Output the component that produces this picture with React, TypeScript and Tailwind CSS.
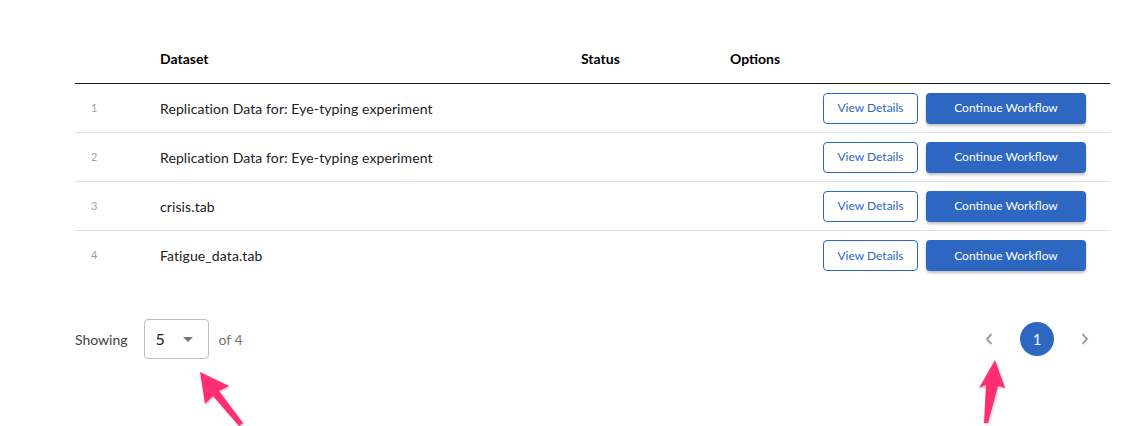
import React from "react";

const rows = [
  "Replication Data for: Eye-typing experiment",
  "Replication Data for: Eye-typing experiment",
  "crisis.tab",
  "Fatigue_data.tab",
];

export default function App() {
  return (
    <div
      className="relative w-full h-[426px] bg-white text-[#212121] overflow-hidden"
      style={{ fontFamily: 'Lato, "Open Sans", sans-serif' }}
    >
      <div className="ml-[75px] w-[1035px] pt-[36px]">
        {/* header */}
        <div className="flex items-center h-[48px] pb-[2px] border-b border-[#1a1a1a] text-[14px] font-bold text-black">
          <div className="w-[85px]" />
          <div className="w-[421px]">Dataset</div>
          <div className="w-[149px]">Status</div>
          <div className="flex-1">Options</div>
        </div>
        {/* rows */}
        {rows.map((r, i) => (
          <div
            key={i}
            className={`flex items-center h-[49px] ${i < rows.length - 1 ? "border-b border-[#e0e0e0]" : ""}`}
          >
            <div className="w-[85px] pl-[16px] text-[11px] text-[#9e9e9e]">{i + 1}</div>
            <div className="w-[421px] text-[14px] tracking-[0.1px] text-[#212121]">{r}</div>
            <div className="w-[149px]" />
            <div className="flex-1 flex justify-end items-center gap-[8px] pr-[24px]">
              <button className="w-[95px] h-[31px] rounded-[4px] border border-[#2e67c1] text-[#2e67c1] text-[12px] bg-white">
                View Details
              </button>
              <button className="w-[160px] h-[31px] rounded-[4px] bg-[#2e67c1] text-white text-[12px] shadow-[0_2px_3px_rgba(0,0,0,0.25)]">
                Continue Workflow
              </button>
            </div>
          </div>
        ))}
        {/* footer */}
        <div className="flex items-center justify-between mt-[39px] h-[40px]">
          <div className="flex items-center">
            <span className="text-[14px] text-[#424242]">Showing</span>
            <div className="ml-[16px] w-[65px] h-[40px] rounded-[4px] border border-[#bdbdbd] flex items-center pl-[11px]">
              <span className="text-[16px] text-[#212121]">5</span>
              <svg className="ml-[18px]" width="10" height="5" viewBox="0 0 10 5">
                <path d="M0 0 L10 0 L5 5 Z" fill="#757575" />
              </svg>
            </div>
            <span className="ml-[10px] text-[14px] text-[#757575]">of 4</span>
          </div>
          <div className="flex items-center gap-[14px] pr-[8px]">
            <div className="w-[34px] h-[34px] flex items-center justify-center">
              <svg width="8" height="12" viewBox="0 0 8 12">
                <path d="M6.5 1 L2 6 L6.5 11" stroke="#a0a0a0" strokeWidth="2" fill="none" />
              </svg>
            </div>
            <div className="w-[34px] h-[34px] rounded-full bg-[#2e67c1] text-white text-[15px] flex items-center justify-center">
              1
            </div>
            <div className="w-[34px] h-[34px] flex items-center justify-center">
              <svg width="8" height="12" viewBox="0 0 8 12">
                <path d="M1.5 1 L6 6 L1.5 11" stroke="#a0a0a0" strokeWidth="2" fill="none" />
              </svg>
            </div>
          </div>
        </div>
      </div>
      {/* annotation arrows */}
      <svg
        className="absolute inset-0 pointer-events-none"
        width="1145"
        height="426"
        viewBox="0 0 1145 426"
      >
        <defs>
          <filter id="sh" x="-20%" y="-20%" width="140%" height="140%">
            <feDropShadow dx="1" dy="1" stdDeviation="1" floodColor="#000" floodOpacity="0.25" />
          </filter>
        </defs>
        <polygon
          points="200,372 229,386 219,391 243,423 239,426 213,396 205,404"
          fill="#fe2e6f"
          filter="url(#sh)"
        />
        <polygon
          points="995,360 1005,388 998,386 988,423 984,423 986,385 979,388"
          fill="#fe2e6f"
          filter="url(#sh)"
        />
      </svg>
    </div>
  );
}
